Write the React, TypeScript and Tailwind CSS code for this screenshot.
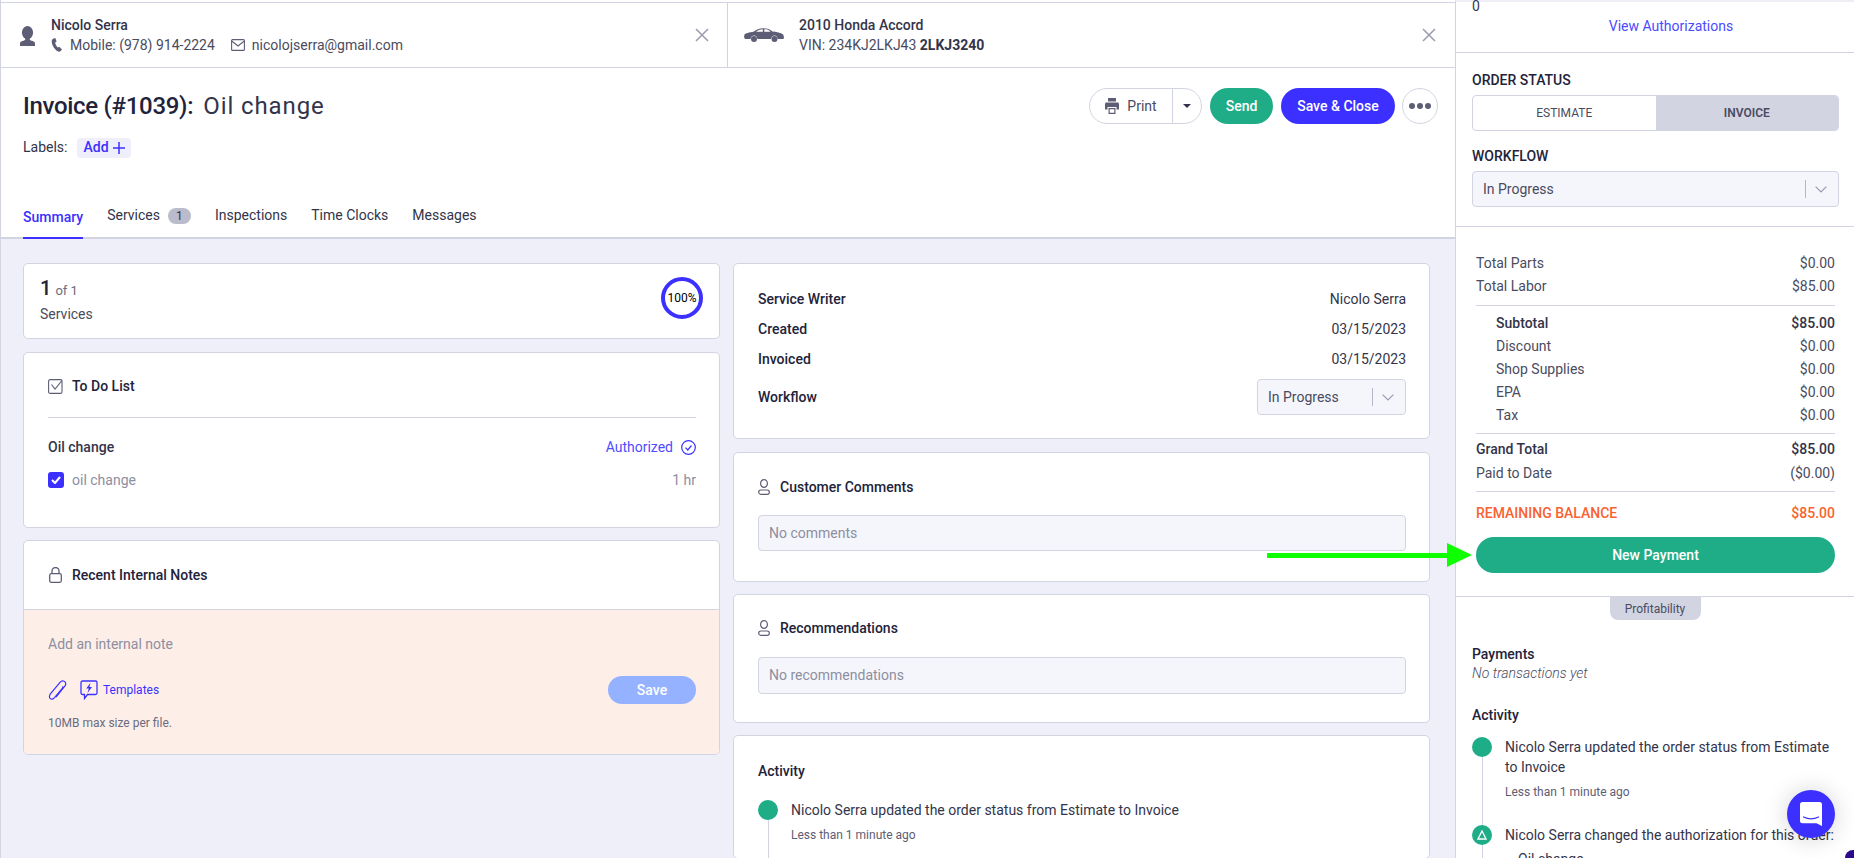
import React from "react";

const Person = ({ className = "" }: { className?: string }) => (
  <svg viewBox="0 0 15 20" className={className} fill="#5d5e75">
    <ellipse cx="7.500" cy="6.600" rx="5.600" ry="6.600" />
    <path d="M5.300 11h4.400v2.200c0 .8 1.200 1.200 3 1.800 1.500.5 2.300 1.400 2.300 2.700V20H0v-2.300c0-1.300.8-2.200 2.300-2.700 1.800-.6 3-1 3-1.800Z" />
  </svg>
);

const Phone = ({ className = "" }: { className?: string }) => (
  <svg viewBox="0 0 12 14" className={className} fill="#5d5e75">
    <path d="M2.600.5 4.300 0 5.600 3.600 4.200 4.600C4.300 6.300 5.300 8.200 6.700 9.400L8.200 8.700 11 11.400 9.900 12.800C8.700 14.200 6.800 13.900 4.900 12 2.200 9.500.6 6 .7 3.100.8 1.900 1.500 1 2.600.5Z" />
  </svg>
);

const Envelope = ({ className = "" }: { className?: string }) => (
  <svg viewBox="0 0 14 12" className={className} fill="none" stroke="#5d5e75" strokeWidth="1.100">
    <rect x="0.600" y="0.600" width="12.800" height="10.800" rx="1" />
    <path d="M1 2.200 7 7l6-4.800" />
  </svg>
);

const Cross = () => (
  <svg viewBox="0 0 14 14" className="w-[14px] h-[14px]" fill="none" stroke="#9a9bb0" strokeWidth="1.500">
    <path d="M1 1l12 12M13 1 1 13" />
  </svg>
);

const Car = () => (
  <svg viewBox="0 0 40 14" className="w-[40px] h-[14px]" fill="#5d5e75">
    <path d="M.5 6.500C1 5.400 5.500 4.300 9.500 3.800 12.500 1.600 15 .3 19 .2c4-.1 6.800.7 9.500 3.400 3.500.3 8.500 1.200 10.700 3l.8 2.600-.5 1.800h-5.800C33.500 8.500 32 7.500 30.500 7.500S27.500 8.500 27 11H13.500C13 8.500 11.500 7.500 10 7.500S7 8.500 6.500 11H1L0 9Z" />
    <path d="M12 3.700C14 2.300 16 1.400 18.800 1.300v2.400ZM20.300 1.300C23 1.300 25 1.900 26.500 3.700h-6.200Z" fill="#ffffff" />
    <circle cx="10" cy="11" r="3" />
    <circle cx="30.500" cy="11" r="3" />
  </svg>
);

const Printer = () => (
  <svg viewBox="0 0 14 16" className="w-[14px] h-[16px]" fill="#5d5e75">
    <path d="M3 0h8v3.500H3z" />
    <path d="M1.500 4.500h11c.8 0 1.500.7 1.500 1.500v5.500h-2.500V9h-9v2.500H0V6c0-.8.700-1.500 1.500-1.500Z" />
    <path d="M3.500 10h7v6h-7zM4.700 11.200v3.600h4.600v-3.600z" fillRule="evenodd" />
  </svg>
);

const Chevron = () => (
  <svg viewBox="0 0 12 7" className="w-[12px] h-[7px]" fill="none" stroke="#9a9bb0" strokeWidth="1.200">
    <path d="M.6.6 6 6l5.400-5.400" />
  </svg>
);

const Bust = () => (
  <svg viewBox="0 0 12 16" className="w-[12px] h-[16px]" fill="none" stroke="#5d5e75" strokeWidth="1.200">
    <ellipse cx="6" cy="4.500" rx="3.400" ry="3.900" />
    <rect x="0.700" y="11" width="10.600" height="4.300" rx="2.100" />
  </svg>
);

const Card = ({ className = "", children }: { className?: string; children: React.ReactNode }) => (
  <div className={`bg-white border border-[#d3d4e2] rounded-[5px] ${className}`}>{children}</div>
);

const SelectBox = ({ className = "" }: { className?: string }) => (
  <div className={`flex items-center justify-between bg-[#f5f6fc] border border-[#d3d4e2] rounded-[4px] pl-[10px] pr-[11px] text-[14px] text-[#4a4b5e] ${className}`}>
    <span>In Progress</span>
    <div className="flex items-center">
      <div className="w-px h-[18px] bg-[#b4b5c6] mr-[9px]" />
      <Chevron />
    </div>
  </div>
);

const Row = ({ label, value, bold, sub }: { label: string; value: string; bold?: boolean; sub?: boolean }) => (
  <div className={`flex justify-between h-[23px] items-center text-[14px] ${bold ? "font-medium text-[#33344a]" : "text-[#4a4b5e]"} ${sub ? "pl-5" : ""}`}>
    <span>{label}</span>
    <span>{value}</span>
  </div>
);

const Meta = ({ label, value }: { label: string; value: string }) => (
  <div className="flex justify-between h-[30px] items-center text-[14px]">
    <span className="font-medium text-[#22233a]">{label}</span>
    <span className="text-[#33344a]">{value}</span>
  </div>
);

export default function App() {
  return (
    <div className="relative w-[1854px] h-[858px] overflow-hidden bg-white text-[14px] text-[#22233a] font-['Roboto','Liberation_Sans',sans-serif] flex">
      <div className="w-[1455px] shrink-0 flex flex-col h-full border-l border-[#d3d4e2]">
        <div className="h-[66px] mt-[2px] shrink-0 flex border-y border-[#d3d4e2]">
          <div className="w-[727px] border-r border-[#d3d4e2] flex items-center pl-[19px] pr-[18px]">
            <Person className="w-[15px] h-[20px] mr-[16px] mt-[2px]" />
            <div className="flex-1">
              <div className="font-medium text-[#33344a] leading-[20px]">Nicolo Serra</div>
              <div className="flex items-center leading-[20px] text-[#4a4b5e]">
                <Phone className="w-[12px] h-[14px] mr-[7px]" />
                <span>Mobile: (978) 914-2224</span>
                <Envelope className="w-[14px] h-[12px] ml-[16px] mr-[7px]" />
                <span>nicolojserra@gmail.com</span>
              </div>
            </div>
            <Cross />
          </div>
          <div className="flex-1 flex items-center pl-[16px] pr-[19px]">
            <Car />
            <div className="flex-1 ml-[15px]">
              <div className="font-medium text-[#33344a] leading-[20px]">2010 Honda Accord</div>
              <div className="leading-[20px] text-[#4a4b5e]">
                VIN: 234KJ2LKJ43 <span className="font-bold text-[#33344a]">2LKJ3240</span>
              </div>
            </div>
            <Cross />
          </div>
        </div>
        <div className="h-[171px] shrink-0 flex flex-col justify-between pl-[22px] border-b-2 border-[#d3d4e2] relative">
          <div className="flex justify-between items-start pt-[21px] pr-[17px]">
            <div>
              <h1 className="text-[24px] leading-[34px] font-medium tracking-[-0.3px] text-[#22233a]">
                Invoice (#1039):<span className="font-normal tracking-[0.9px] text-[#33344a] ml-[10px]">Oil change</span>
              </h1>
              <div className="flex items-center mt-[14px]">
                <span className="text-[#33344a] mr-[10px]">Labels:</span>
                <span className="flex items-center gap-[4px] h-[20px] px-[6px] rounded-[4px] bg-[#eeeffa] text-[#3b30ff] font-medium">
                  Add
                  <svg viewBox="0 0 12 12" className="w-[12px] h-[12px]" fill="none" stroke="#3b30ff" strokeWidth="1.500">
                    <path d="M6 0v12M0 6h12" />
                  </svg>
                </span>
              </div>
            </div>
            <div className="flex items-center gap-[8px] -mt-[1px]">
              <div className="flex h-[36px] w-[113px] rounded-full border border-[#d3d4e2] items-center">
                <div className="flex-1 flex items-center justify-center gap-[8px] h-full border-r border-[#d3d4e2] text-[#4a4b5e]">
                  <Printer />
                  <span>Print</span>
                </div>
                <div className="w-[28px] flex justify-center">
                  <div className="w-0 h-0 border-x-[4px] border-x-transparent border-t-[4px] border-t-[#33344a]" />
                </div>
              </div>
              <button className="h-[36px] w-[63px] rounded-full bg-[#1fad87] text-white font-medium">Send</button>
              <button className="h-[36px] w-[114px] rounded-full bg-[#3b30ff] text-white font-medium">Save &amp; Close</button>
              <div className="h-[36px] w-[36px] -ml-[1px] rounded-full border border-[#d3d4e2] flex items-center justify-center gap-[2px]">
                <span className="w-[6px] h-[6px] rounded-full bg-[#5d5e75]" />
                <span className="w-[6px] h-[6px] rounded-full bg-[#5d5e75]" />
                <span className="w-[6px] h-[6px] rounded-full bg-[#5d5e75]" />
              </div>
            </div>
          </div>
          <div className="flex gap-[24px] h-[36px] text-[#33344a]">
            <div className="h-[36px] pt-[4px] border-b-2 border-[#3b30ff] text-[#3b30ff] font-medium relative top-[2px]">Summary</div>
            <div className="pt-[4px] flex items-start gap-[8px]">
              Services
              <span className="h-[16px] w-[23px] mt-[3px] rounded-full bg-[#babbcb] text-[12px] leading-[16px] text-center">1</span>
            </div>
            <div className="pt-[4px]">Inspections</div>
            <div className="pt-[4px]">Time Clocks</div>
            <div className="pt-[4px]">Messages</div>
          </div>
        </div>
        <div className="flex-1 bg-[#eeeff8] flex gap-[13px] pl-[22px] pr-[25px] pt-[24px] overflow-hidden">
          <div className="w-[697px] flex flex-col">
            <Card className="h-[76px] shrink-0 pl-[16px] pr-[15px] pt-[11px] flex items-start justify-between">
              <div>
                <div className="flex items-baseline gap-[4px]">
                  <span className="text-[20px] leading-[26px] font-medium">1</span>
                  <span className="text-[13px] text-[#6b6c80]">of 1</span>
                </div>
                <div className="mt-[3px] text-[#4a4b5e] leading-[20px]">Services</div>
              </div>
              <div className="w-[42px] h-[42px] mt-[2px] rounded-full border-[4px] border-[#3b30ff] flex items-center justify-center text-[12px] text-black mr-[1px]">100%</div>
            </Card>
            <Card className="h-[176px] mt-[13px] shrink-0 pl-[24px] pr-[23px] pt-[22px]">
              <div className="flex items-center gap-[9px] h-[22px] font-medium">
                <svg viewBox="0 0 15 15" className="w-[15px] h-[15px]" fill="none" stroke="#5d5e75" strokeWidth="1.100">
                  <rect x="0.600" y="0.600" width="13.400" height="13.800" rx="1.500" />
                  <path d="M3.500 5.500 7 10l7-8.500" />
                </svg>
                To Do List
              </div>
              <div className="border-t border-[#d3d4e2] mt-[20px]" />
              <div className="flex justify-between items-center h-[20px] mt-[19px]">
                <span className="font-medium text-[#33344a]">Oil change</span>
                <span className="flex items-center gap-[8px] text-[#4f4cff]">
                  Authorized
                  <svg viewBox="0 0 15 15" className="w-[15px] h-[15px]" fill="none" stroke="#3b30ff" strokeWidth="1.200">
                    <circle cx="7.500" cy="7.500" r="6.800" />
                    <path d="M4.500 7.700 6.800 10l3.700-4.500" />
                  </svg>
                </span>
              </div>
              <div className="flex justify-between items-center h-[16px] mt-[15px] text-[#8d8e9f]">
                <span className="flex items-center gap-[8px]">
                  <span className="w-[16px] h-[16px] rounded-[3px] bg-[#3b30ff] flex items-center justify-center">
                    <svg viewBox="0 0 10 8" className="w-[10px] h-[8px]" fill="none" stroke="#fff" strokeWidth="2">
                      <path d="M1 4l3 3 5-6" />
                    </svg>
                  </span>
                  oil change
                </span>
                <span>1 hr</span>
              </div>
            </Card>
            <Card className="h-[215px] mt-[12px] shrink-0 overflow-hidden flex flex-col">
              <div className="h-[69px] shrink-0 px-[25px] flex items-center gap-[10px] font-medium border-b border-[#d3d4e2]">
                <svg viewBox="0 0 13 16" className="w-[13px] h-[16px]" fill="none" stroke="#5d5e75" strokeWidth="1.300">
                  <rect x="0.700" y="6.700" width="11.600" height="8.600" rx="1.500" />
                  <path d="M3 6.500V4a3.500 3.500 0 0 1 7 0v2.500" />
                </svg>
                Recent Internal Notes
              </div>
              <div className="flex-1 bg-[#fdefe8] pl-[24px] pr-[23px] pt-[24px]">
                <div className="text-[#8d8e9f] leading-[20px]">Add an internal note</div>
                <div className="flex justify-between items-center mt-[22px]">
                  <div className="flex items-center">
                    <svg viewBox="0 0 20 20" className="w-[20px] h-[20px]" fill="none" stroke="#3b30ff" strokeWidth="1.200">
                      <path d="M8 17 17 6C18.500 4 17.500 1.500 15.500 1 14 .7 13 1.200 12 2.400L2.600 13.600C.8 16 1.300 18 2.500 18.800 3.800 19.500 5.200 19 6.300 17.800L14.500 8.200C15 7.500 14.800 6.800 14.300 6.500" />
                    </svg>
                    <svg viewBox="0 0 18 20" className="w-[18px] h-[20px] ml-[12px]" fill="none" stroke="#3b30ff" strokeWidth="1.300">
                      <path d="M2.500 1h13c.8 0 1.500.7 1.500 1.500V13c0 .8-.7 1.500-1.500 1.500H7.500L4.500 18.500V14.500h-2C1.700 14.500 1 13.800 1 13V2.500C1 1.700 1.700 1 2.500 1Z" />
                      <path d="M10.500 2.800 6.200 8.600H8.800L7.500 13l4.500-6H9.400Z" fill="#3b30ff" stroke="none" />
                    </svg>
                    <span className="ml-[5px] text-[12px] text-[#3b30ff]">Templates</span>
                  </div>
                  <button className="h-[28px] w-[88px] rounded-full bg-[#94b2ff] text-white font-medium">Save</button>
                </div>
                <div className="text-[12px] text-[#6b6c80] mt-[11px] leading-[16px]">10MB max size per file.</div>
              </div>
            </Card>
          </div>
          <div className="w-[697px] flex flex-col">
            <Card className="h-[176px] pl-[24px] pr-[23px] pt-[20px] shrink-0">
              <Meta label="Service Writer" value="Nicolo Serra" />
              <Meta label="Created" value="03/15/2023" />
              <Meta label="Invoiced" value="03/15/2023" />
              <div className="flex justify-between items-center mt-[5px]">
                <span className="font-medium">Workflow</span>
                <SelectBox className="w-[149px] h-[36px]" />
              </div>
            </Card>
            <Card className="h-[130px] mt-[13px] pl-[24px] pr-[23px] pt-[24px] shrink-0">
              <div className="flex items-center gap-[10px] font-medium leading-[20px]">
                <Bust />
                Customer Comments
              </div>
              <div className="mt-[18px] h-[36px] bg-[#f5f6fc] border border-[#d3d4e2] rounded-[4px] px-[10px] flex items-center text-[#8d8e9f]">No comments</div>
            </Card>
            <Card className="h-[129px] mt-[12px] pl-[24px] pr-[23px] pt-[23px] shrink-0">
              <div className="flex items-center gap-[10px] font-medium leading-[20px]">
                <Bust />
                Recommendations
              </div>
              <div className="mt-[19px] h-[37px] bg-[#f5f6fc] border border-[#d3d4e2] rounded-[4px] px-[10px] flex items-center text-[#8d8e9f]">No recommendations</div>
            </Card>
            <Card className="flex-1 mt-[12px] px-[24px] pt-[25px] -mb-px min-h-[124px]">
              <div className="font-medium leading-[20px]">Activity</div>
              <div className="flex mt-[19px]">
                <div className="flex flex-col items-center w-[20px] mr-[13px]">
                  <span className="w-[20px] h-[20px] rounded-full bg-[#1fad87] shrink-0" />
                  <span className="w-px h-[60px] bg-[#d3d4e2]" />
                </div>
                <div>
                  <div className="leading-[20px] text-[#33344a]">Nicolo Serra updated the order status from Estimate to Invoice</div>
                  <div className="text-[12px] text-[#5d5e75] mt-[7px] leading-[16px]">Less than 1 minute ago</div>
                </div>
              </div>
            </Card>
          </div>
        </div>
      </div>

      <div className="flex-1 min-w-0 border-l border-[#d3d4e2] border-t-2 border-t-[#eeeef4] h-full flex flex-col">
        <div className="h-[51px] shrink-0 border-b border-[#d3d4e2] relative">
          <div className="absolute left-[16px] top-[-4px] text-[14px] leading-[16px] text-[#33344a]">0</div>
          <div className="text-center text-[#4b4bff] pl-[32px] pt-[14px] leading-[20px]">View Authorizations</div>
        </div>
        <div className="h-[174px] shrink-0 border-b border-[#d3d4e2] pl-[16px] pr-[15px] pt-[17px]">
          <div className="font-medium leading-[20px] text-[#22233a]">ORDER STATUS</div>
          <div className="flex h-[36px] mt-[5px] rounded-[4px] overflow-hidden border border-[#d3d4e2] text-[12px]">
            <div className="w-1/2 flex items-center justify-center text-[#4a4b5e]">ESTIMATE</div>
            <div className="w-1/2 flex items-center justify-center bg-[#d3d4e2] font-semibold text-[#4a4b5e]">INVOICE</div>
          </div>
          <div className="font-medium leading-[20px] mt-[15px] text-[#22233a]">WORKFLOW</div>
          <SelectBox className="h-[36px] mt-[5px]" />
        </div>
        <div className="h-[370px] shrink-0 border-b border-[#d3d4e2] pl-[20px] pr-[19px] pt-[25px]">
          <Row label="Total Parts" value="$0.00" />
          <Row label="Total Labor" value="$85.00" />
          <div className="border-t border-[#d3d4e2] mt-[7px] mb-[6px]" />
          <Row sub bold label="Subtotal" value="$85.00" />
          <Row sub label="Discount" value="$0.00" />
          <Row sub label="Shop Supplies" value="$0.00" />
          <Row sub label="EPA" value="$0.00" />
          <Row sub label="Tax" value="$0.00" />
          <div className="border-t border-[#d3d4e2] mt-[6px] mb-[4px]" />
          <Row bold label="Grand Total" value="$85.00" />
          <div className="mt-[1px]">
            <Row label="Paid to Date" value="($0.00)" />
          </div>
          <div className="border-t border-[#d3d4e2] mt-[6px] mb-[10px]" />
          <div className="flex justify-between h-[23px] items-center font-medium text-[#f96230]">
            <span>REMAINING BALANCE</span>
            <span>$85.00</span>
          </div>
          <button className="mt-[12px] w-full h-[36px] rounded-full bg-[#1fad87] text-white font-medium">New Payment</button>
        </div>
        <div className="flex justify-center shrink-0">
          <div className="w-[91px] h-[23px] rounded-b-[8px] bg-[#d3d4e2] text-[12px] text-[#4a4b5e] flex items-center justify-center">Profitability</div>
        </div>
        <div className="px-[16px] pt-[24px]">
          <div className="font-medium leading-[20px]">Payments</div>
          <div className="italic font-light text-[#4a4b5e] leading-[18px]">No transactions yet</div>
          <div className="font-medium leading-[20px] mt-[23px]">Activity</div>
          <div className="flex mt-[12px]">
            <div className="flex flex-col items-center w-[20px] mr-[13px] shrink-0">
              <span className="w-[20px] h-[20px] rounded-full bg-[#1fad87] shrink-0" />
              <span className="w-px h-[68px] bg-[#d3d4e2]" />
              <span className="w-[20px] h-[20px] rounded-full bg-[#1fad87] shrink-0 flex items-center justify-center">
                <svg viewBox="0 0 10 10" className="w-[10px] h-[10px]" fill="none" stroke="#fff" strokeWidth="1.300">
                  <path d="M5 1 9 9H1Z" />
                </svg>
              </span>
              <span className="w-px h-[20px] bg-[#d3d4e2]" />
            </div>
            <div className="text-[#33344a]">
              <div className="leading-[20px]">Nicolo Serra updated the order status from Estimate to Invoice</div>
              <div className="text-[12px] text-[#5d5e75] mt-[7px] leading-[16px]">Less than 1 minute ago</div>
              <div className="leading-[20px] mt-[25px] whitespace-nowrap">Nicolo Serra changed the authorization for this order:</div>
              <div className="pl-[13px] mt-[4px] leading-[20px]">Oil change</div>
            </div>
          </div>
        </div>
      </div>

      <div className="absolute left-[1267px] top-[543px] flex items-center">
        <div className="w-[180px] h-[5px] bg-[#0dff00]" />
        <div className="w-0 h-0 border-y-[12px] border-y-transparent border-l-[25px] border-l-[#0dff00]" />
      </div>
      <div className="absolute left-[1787px] top-[790px] w-[48px] h-[48px] rounded-full bg-[#3b30ff] flex items-center justify-center shadow-[0_1px_24px_rgba(0,0,0,0.18)]">
        <svg viewBox="0 0 22 24" className="w-[22px] h-[24px]">
          <path d="M2.500 0h17A2.500 2.500 0 0 1 22 2.500V24l-5.500-2.800H2.500A2.500 2.500 0 0 1 0 18.700V2.500A2.500 2.500 0 0 1 2.500 0Z" fill="#fff" />
          <path d="M3.500 15c4.500 2.200 10.500 2.200 15 0" fill="none" stroke="#3b30ff" strokeWidth="1.300" strokeLinecap="round" />
        </svg>
      </div>
      <div className="absolute right-0 bottom-0 w-[9px] h-[8px] rounded-tl-full bg-[#2a0a8a]" />
    </div>
  );
}
